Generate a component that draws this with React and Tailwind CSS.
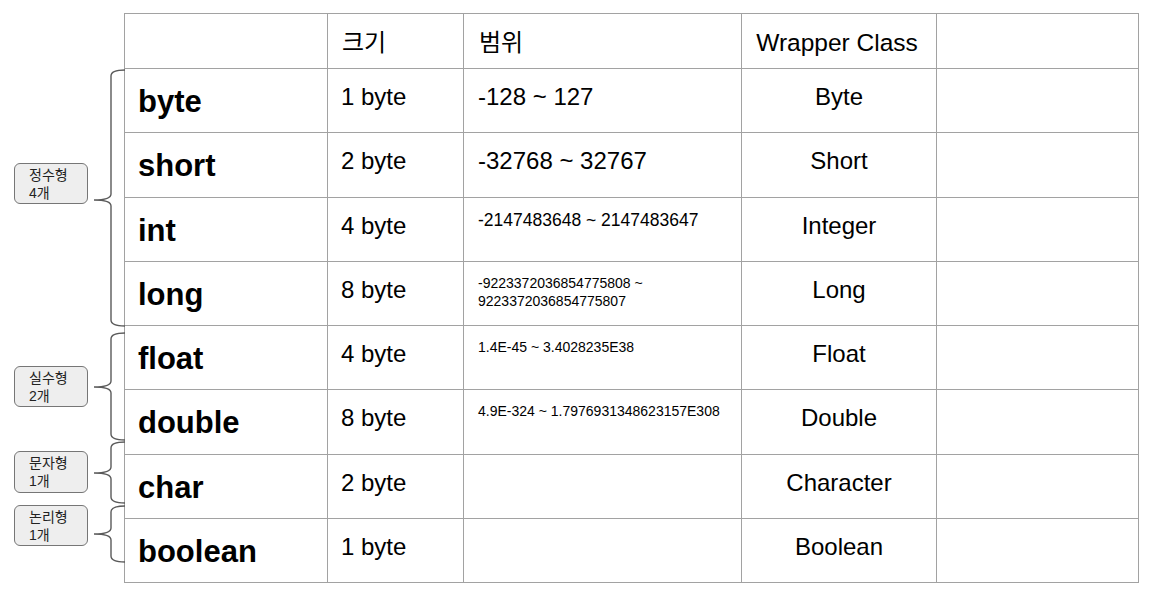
import React from 'react';

const font = "font-['Liberation_Sans','Noto_Sans_CJK_KR',sans-serif]";

const rows = [
  { name: 'byte', size: '1 byte', range: ['-128 ~ 127'], kind: 'big', wrap: 'Byte' },
  { name: 'short', size: '2 byte', range: ['-32768 ~ 32767'], kind: 'big', wrap: 'Short' },
  { name: 'int', size: '4 byte', range: ['-2147483648 ~ 2147483647'], kind: 'mid', wrap: 'Integer' },
  { name: 'long', size: '8 byte', range: ['-9223372036854775808 ~', '9223372036854775807'], kind: 'small', wrap: 'Long' },
  { name: 'float', size: '4 byte', range: ['1.4E-45 ~ 3.4028235E38'], kind: 'small', wrap: 'Float' },
  { name: 'double', size: '8 byte', range: ['4.9E-324 ~ 1.7976931348623157E308'], kind: 'small', wrap: 'Double' },
  { name: 'char', size: '2 byte', range: [], kind: 'small', wrap: 'Character' },
  { name: 'boolean', size: '1 byte', range: [], kind: 'small', wrap: 'Boolean' },
];

// brace groups: top, tip, bottom (page y)
const braces = [
  [70, 200, 326],
  [333, 387, 440],
  [442, 473, 503],
  [506, 534, 562],
];

const labels = [
  { top: 163, h: 41, a: '정수형', b: '4개' },
  { top: 366, h: 41, a: '실수형', b: '2개' },
  { top: 451, h: 42, a: '문자형', b: '1개' },
  { top: 505, h: 41, a: '논리형', b: '1개' },
];

function bracePath([t, m, b]) {
  return `M125 ${t} Q111 ${t} 111 ${t + 6} L111 ${m - 6} Q111 ${m} 94 ${m} Q111 ${m} 111 ${m + 6} L111 ${b - 6} Q111 ${b} 125 ${b}`;
}

const cell = 'border-r border-b border-[#a2a2a2]';

function RangeText({ kind, lines }) {
  if (kind === 'big') {
    return <div className="pt-[16px] pl-[14px] text-[24px] leading-none">{lines[0]}</div>;
  }
  if (kind === 'mid') {
    return <div className="pt-[14px] pl-[14px] text-[17.5px] leading-none">{lines[0]}</div>;
  }
  return (
    <div className="pt-[12px] pl-[14px] text-[14px] leading-[18px]">
      {lines.map((l) => (
        <div key={l}>{l}</div>
      ))}
    </div>
  );
}

export default function App() {
  return (
    <div className={`w-[1156px] h-[591px] bg-white flex text-black ${font}`}>
      {/* annotations on the left */}
      <div className="relative w-[124px] shrink-0">
        <svg className="absolute inset-0" width="130" height="591" viewBox="0 0 130 591">
          {braces.map((br, i) => (
            <path key={i} d={bracePath(br)} fill="none" stroke="#5a5a5a" strokeWidth="1.4" />
          ))}
        </svg>
        {labels.map((l) => (
          <div
            key={l.a}
            className="absolute left-[14px] w-[74px] rounded-[6px] border border-[#767676] bg-[#eeeeee] pl-[14px] pt-[2px] text-[14px] leading-[18px] text-[#222]"
            style={{ top: l.top, height: l.h }}
          >
            <div>{l.a}</div>
            <div>{l.b}</div>
          </div>
        ))}
      </div>

      {/* table */}
      <div className="mt-[13px] w-[1015px] h-[570px] grid grid-cols-[203px_136px_278px_195px_1fr] grid-rows-[55px_repeat(8,1fr)] border-l border-t border-[#a2a2a2]">
        <div className={cell} />
        <div className={`${cell} pt-[17px] pl-[14px] text-[24px] leading-none`}>크기</div>
        <div className={`${cell} pt-[17px] pl-[15px] text-[24px] leading-none`}>범위</div>
        <div className={`${cell} pt-[17px] pr-[4px] text-center text-[24.5px] leading-none`}>Wrapper Class</div>
        <div className={cell} />
        {rows.map((r) => (
          <React.Fragment key={r.name}>
            <div className={`${cell} pt-[17px] pl-[13px] text-[31px] font-bold leading-none`}>{r.name}</div>
            <div className={`${cell} pt-[16px] pl-[13px] text-[24px] leading-none`}>{r.size}</div>
            <div className={cell}>
              <RangeText kind={r.kind} lines={r.range} />
            </div>
            <div className={`${cell} pt-[16px] text-center text-[24px] leading-none`}>{r.wrap}</div>
            <div className={cell} />
          </React.Fragment>
        ))}
      </div>
    </div>
  );
}
